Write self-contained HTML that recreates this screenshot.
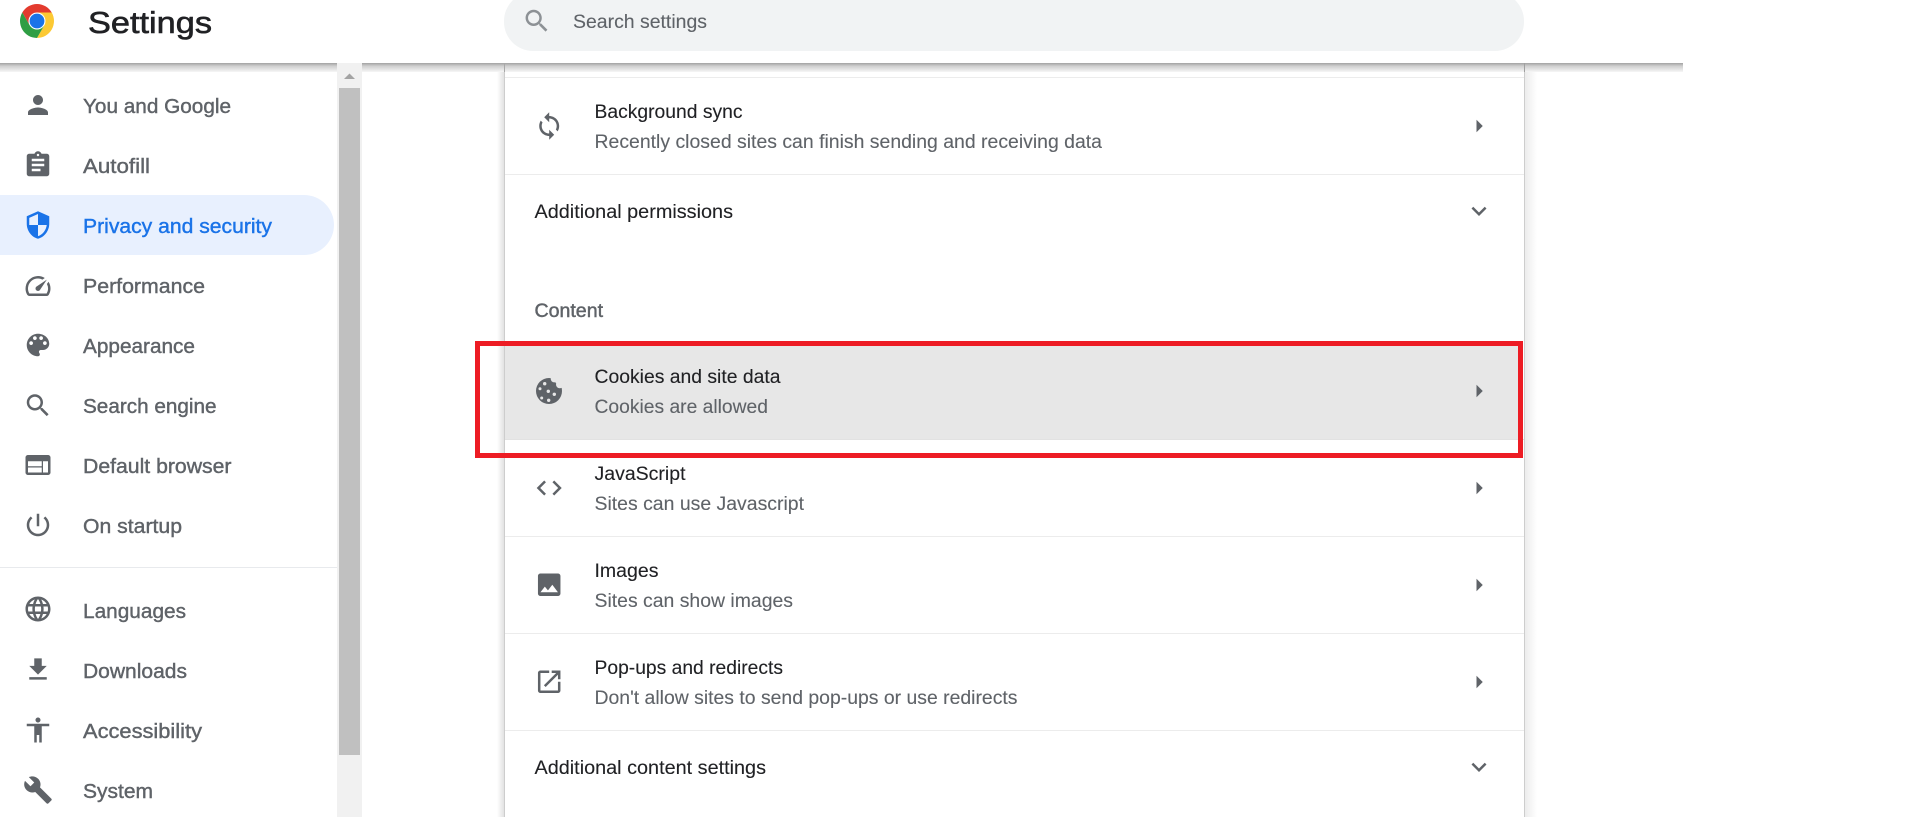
<!DOCTYPE html>
<html lang="en">
<head>
<meta charset="utf-8">
<title>Settings</title>
<style>
html,body{margin:0;padding:0;background:#fff;width:1911px;height:817px;overflow:hidden}
svg{display:block;filter:blur(.3px)}
text{font-family:"Liberation Sans",Arial,sans-serif}
.nav{font-size:20px;fill:#5f6368;stroke:#5f6368;stroke-width:.4px}
.t{font-size:19.3px;fill:#202124;stroke:#202124;stroke-width:.1px}
.s{font-size:19.3px;fill:#5f6368;stroke:#5f6368;stroke-width:.1px}
.i{fill:#5f6368}
</style>
</head>
<body>
<svg width="1911" height="817" viewBox="0 0 1911 817" xmlns="http://www.w3.org/2000/svg">
<defs>
<linearGradient id="hs" x1="0" y1="0" x2="0" y2="1"><stop offset="0" stop-color="#a2a2a2"/><stop offset=".35" stop-color="#cfcfcf"/><stop offset="1" stop-color="#f6f6f6"/></linearGradient>
<linearGradient id="cl" x1="0" y1="0" x2="1" y2="0"><stop offset="0" stop-color="#fff"/><stop offset="1" stop-color="#e2e2e2"/></linearGradient>
<linearGradient id="cr" x1="0" y1="0" x2="1" y2="0"><stop offset="0" stop-color="#ececec"/><stop offset="1" stop-color="#fff"/></linearGradient>
<path id="ar" d="M10 7l5 5-5 5z"/>
<path id="ch" d="M16.59 8.59L12 13.17 7.41 8.59 6 10l6 6 6-6z"/>
</defs>

<rect width="1911" height="817" fill="#fff"/>

<!-- card -->
<rect x="497" y="63" width="7" height="754" fill="url(#cl)"/>
<rect x="1525" y="63" width="12" height="754" fill="url(#cr)"/>
<rect x="504" y="63" width="1" height="754" fill="#cdcdcd"/>
<rect x="1524" y="63" width="1" height="754" fill="#cdcdcd"/>
<rect x="505" y="77" width="1019" height="1" fill="#ececec"/>
<rect x="505" y="174" width="1019" height="1" fill="#ececec"/>
<rect x="505" y="341" width="1016" height="98" fill="#e7e7e7"/>
<rect x="505" y="439" width="1019" height="1" fill="#e2e2e2"/>
<rect x="505" y="536" width="1019" height="1" fill="#ececec"/>
<rect x="505" y="633" width="1019" height="1" fill="#ececec"/>
<rect x="505" y="730" width="1019" height="1" fill="#ececec"/>

<!-- header -->
<rect x="0" y="0" width="1911" height="63" fill="#fff"/>
<rect x="0" y="63" width="1683" height="9" fill="url(#hs)"/>
<rect x="504" y="63" width="1" height="9" fill="#a8a8a8"/>
<rect x="1524" y="63" width="1" height="9" fill="#a0a0a0"/>

<!-- chrome logo -->
<g>
<circle cx="37" cy="21" r="17" fill="#fff"/>
<path fill="#e33b2e" d="M22.28 12.5A17 17 0 0 1 51.72 12.5L37 12.5A8.5 8.5 0 0 0 29.64 25.25Z"/>
<path fill="#fcc934" transform="rotate(120 37 21)" d="M22.28 12.5A17 17 0 0 1 51.72 12.5L37 12.5A8.5 8.5 0 0 0 29.64 25.25Z"/>
<path fill="#2f9e44" transform="rotate(240 37 21)" d="M22.28 12.5A17 17 0 0 1 51.72 12.5L37 12.5A8.5 8.5 0 0 0 29.64 25.25Z"/>
<circle cx="37" cy="21" r="7.4" fill="#1a73e8"/>
</g>
<text x="88" y="33" font-size="31" fill="#202124" stroke="#202124" stroke-width=".6" textLength="124" lengthAdjust="spacingAndGlyphs">Settings</text>

<!-- search -->
<rect x="504" y="-8" width="1020" height="59" rx="29" ry="29" fill="#f1f3f4"/>
<g transform="translate(521.8 6) scale(1.25)"><path fill="#8d9195" d="M15.5 14h-.79l-.28-.27C15.41 12.59 16 11.11 16 9.5 16 5.91 13.09 3 9.5 3S3 5.91 3 9.5 5.91 16 9.5 16c1.61 0 3.09-.59 4.23-1.57l.27.28v.79l5 4.99L20.49 19l-4.99-5zm-6 0C7.01 14 5 11.99 5 9.5S7.01 5 9.5 5 14 7.01 14 9.5 11.99 14 9.5 14z"/></g>
<text x="573" y="28" font-size="19.3" fill="#5f6368" stroke="#5f6368" stroke-width=".1" textLength="134" lengthAdjust="spacingAndGlyphs">Search settings</text>

<!-- sidebar -->
<path d="M0 195H304A30 30 0 0 1 304 255H0Z" fill="#e8f0fe"/>
<rect x="0" y="567" width="337" height="1" fill="#e8eaed"/>

<text class="nav" x="83" y="113" textLength="148" lengthAdjust="spacingAndGlyphs">You and Google</text>
<text class="nav" x="83" y="173" textLength="67" lengthAdjust="spacingAndGlyphs">Autofill</text>
<text class="nav" x="83" y="233" textLength="189" lengthAdjust="spacingAndGlyphs" style="fill:#1a73e8;stroke:#1a73e8">Privacy and security</text>
<text class="nav" x="83" y="293" textLength="122" lengthAdjust="spacingAndGlyphs">Performance</text>
<text class="nav" x="83" y="353" textLength="112" lengthAdjust="spacingAndGlyphs">Appearance</text>
<text class="nav" x="83" y="413" textLength="133.5" lengthAdjust="spacingAndGlyphs">Search engine</text>
<text class="nav" x="83" y="473" textLength="148.5" lengthAdjust="spacingAndGlyphs">Default browser</text>
<text class="nav" x="83" y="533" textLength="99" lengthAdjust="spacingAndGlyphs">On startup</text>
<text class="nav" x="83" y="618" textLength="103" lengthAdjust="spacingAndGlyphs">Languages</text>
<text class="nav" x="83" y="678" textLength="104" lengthAdjust="spacingAndGlyphs">Downloads</text>
<text class="nav" x="83" y="738" textLength="119" lengthAdjust="spacingAndGlyphs">Accessibility</text>
<text class="nav" x="83" y="798" textLength="70" lengthAdjust="spacingAndGlyphs">System</text>

<g class="i">
<path transform="translate(23 90) scale(1.25)" d="M12 12c2.21 0 4-1.79 4-4s-1.79-4-4-4-4 1.79-4 4 1.79 4 4 4zm0 2c-2.67 0-8 1.34-8 4v2h16v-2c0-2.66-5.33-4-8-4z"/>
<path transform="translate(23 150) scale(1.25)" d="M19 3h-4.18C14.4 1.84 13.3 1 12 1c-1.3 0-2.4.84-2.82 2H5c-1.1 0-2 .9-2 2v14c0 1.1.9 2 2 2h14c1.1 0 2-.9 2-2V5c0-1.1-.9-2-2-2zm-7 0c.55 0 1 .45 1 1s-.45 1-1 1-1-.45-1-1 .45-1 1-1zm2 14H7v-2h7v2zm3-4H7v-2h10v2zm0-4H7V7h10v2z"/>
<path fill="#1a73e8" transform="translate(23 210) scale(1.25)" d="M12 1L3 5v6c0 5.55 3.84 10.74 9 12 5.16-1.26 9-6.45 9-12V5l-9-4zm0 10.99h7c-.53 4.12-3.28 7.79-7 8.94V12H5V6.3l7-3.11v8.8z"/>
<path transform="translate(23 271) scale(1.25)" d="M20.38 8.57l-1.23 1.85a8 8 0 0 1-.22 7.58H5.07A8 8 0 0 1 15.58 6.85l1.85-1.23A10 10 0 0 0 3.35 19a2 2 0 0 0 1.72 1h13.85a2 2 0 0 0 1.74-1 10 10 0 0 0-.27-10.44zm-9.79 6.84a2 2 0 0 0 2.83 0l5.66-8.49-8.49 5.66a2 2 0 0 0 0 2.83z"/>
<path transform="translate(23 330) scale(1.25)" d="M12 3c-4.97 0-9 4.03-9 9s4.03 9 9 9c.83 0 1.5-.67 1.5-1.5 0-.39-.15-.74-.39-1.01-.23-.26-.38-.61-.38-.99 0-.83.67-1.5 1.5-1.5H16c2.76 0 5-2.24 5-5 0-4.42-4.03-8-9-8zm-5.5 9c-.83 0-1.5-.67-1.5-1.5S5.67 9 6.5 9 8 9.67 8 10.5 7.33 12 6.5 12zm3-4C8.67 8 8 7.33 8 6.5S8.67 5 9.5 5s1.5.67 1.5 1.5S10.33 8 9.5 8zm5 0c-.83 0-1.5-.67-1.5-1.5S13.67 5 14.5 5s1.5.67 1.5 1.5S15.33 8 14.5 8zm3 4c-.83 0-1.5-.67-1.5-1.5S16.67 9 17.5 9s1.5.67 1.5 1.5-.67 1.5-1.5 1.5z"/>
<path transform="translate(23 390.5) scale(1.25)" d="M15.5 14h-.79l-.28-.27C15.41 12.59 16 11.11 16 9.5 16 5.91 13.09 3 9.5 3S3 5.91 3 9.5 5.91 16 9.5 16c1.61 0 3.09-.59 4.23-1.57l.27.28v.79l5 4.99L20.49 19l-4.99-5zm-6 0C7.01 14 5 11.99 5 9.5S7.01 5 9.5 5 14 7.01 14 9.5 11.99 14 9.5 14z"/>
<path transform="translate(23 450) scale(1.25)" d="M20 4H4c-1.1 0-1.99.9-1.99 2L2 18c0 1.1.9 2 2 2h16c1.1 0 2-.9 2-2V6c0-1.1-.9-2-2-2zm-5 14H4v-4h11v4zm0-5H4V9h11v4zm5 5h-4V9h4v9z"/>
<path transform="translate(23 510) scale(1.25)" d="M13 3h-2v10h2V3zm4.83 2.17l-1.42 1.42C17.99 7.86 19 9.81 19 12c0 3.87-3.13 7-7 7s-7-3.13-7-7c0-2.19 1.01-4.14 2.58-5.42L6.17 5.17C4.23 6.82 3 9.26 3 12c0 4.97 4.03 9 9 9s9-4.03 9-9c0-2.74-1.23-5.18-3.17-6.83z"/>
<path transform="translate(23 594) scale(1.25)" d="M11.99 2C6.47 2 2 6.48 2 12s4.47 10 9.99 10C17.52 22 22 17.52 22 12S17.52 2 11.99 2zm6.93 6h-2.95c-.32-1.25-.78-2.45-1.38-3.56 1.84.63 3.37 1.91 4.33 3.56zM12 4.04c.83 1.2 1.48 2.53 1.91 3.96h-3.82c.43-1.43 1.08-2.76 1.91-3.96zM4.26 14C4.1 13.36 4 12.69 4 12s.1-1.36.26-2h3.38c-.08.66-.14 1.32-.14 2 0 .68.06 1.34.14 2H4.26zm.82 2h2.95c.32 1.25.78 2.45 1.38 3.56-1.84-.63-3.37-1.9-4.33-3.56zm2.95-8H5.08c.96-1.66 2.49-2.93 4.33-3.56C8.81 5.55 8.35 6.75 8.03 8zM12 19.96c-.83-1.2-1.48-2.53-1.91-3.96h3.82c-.43 1.43-1.08 2.76-1.91 3.96zM14.34 14H9.66c-.09-.66-.16-1.32-.16-2 0-.68.07-1.35.16-2h4.68c.09.65.16 1.32.16 2 0 .68-.07 1.34-.16 2zm.25 5.56c.6-1.11 1.06-2.31 1.38-3.56h2.95c-.96 1.65-2.49 2.93-4.33 3.56zM16.36 14c.08-.66.14-1.32.14-2 0-.68-.06-1.34-.14-2h3.38c.16.64.26 1.31.26 2s-.1 1.36-.26 2h-3.38z"/>
<path transform="translate(23 654.6) scale(1.25)" d="M19 9h-4V3H9v6H5l7 7 7-7zM5 18v2h14v-2H5z"/>
<path transform="translate(23 715) scale(1.25)" d="M12 2c1.1 0 2 .9 2 2s-.9 2-2 2-2-.9-2-2 .9-2 2-2zm9 7h-6v13h-2v-6h-2v6H9V9H3V7h18v2z"/>
<path transform="translate(23 775) scale(1.25)" d="M22.7 19l-9.1-9.1c.9-2.3.4-5-1.5-6.9-2-2-5-2.4-7.4-1.3L9 6 6 9 1.6 4.7C.4 7.1.9 10.1 2.9 12.1c1.9 1.9 4.6 2.4 6.9 1.5l9.1 9.1c.4.4 1 .4 1.4 0l2.3-2.3c.5-.4.5-1.1.1-1.4z"/>
</g>

<!-- scrollbar -->
<rect x="337" y="63" width="25" height="754" fill="#f1f1f1"/>
<rect x="339" y="88" width="21" height="667" fill="#c0c0c0"/>
<path d="M344 79L349.5 73.500L355 79Z" fill="#a3a3a3"/>

<!-- main text -->
<text class="t" x="594.500" y="118" textLength="148" lengthAdjust="spacingAndGlyphs">Background sync</text>
<text class="s" x="594.500" y="148" textLength="507.500" lengthAdjust="spacingAndGlyphs">Recently closed sites can finish sending and receiving data</text>
<text class="t" x="534.500" y="218" textLength="198.500" lengthAdjust="spacingAndGlyphs">Additional permissions</text>
<text x="534.500" y="317" font-size="19" fill="#5f6368" stroke="#5f6368" stroke-width=".45" textLength="68.500" lengthAdjust="spacingAndGlyphs">Content</text>
<text class="t" x="594.500" y="383" textLength="186" lengthAdjust="spacingAndGlyphs">Cookies and site data</text>
<text class="s" x="594.500" y="413" textLength="173.500" lengthAdjust="spacingAndGlyphs">Cookies are allowed</text>
<text class="t" x="594.500" y="480" textLength="91" lengthAdjust="spacingAndGlyphs">JavaScript</text>
<text class="s" x="594.500" y="510" textLength="209.500" lengthAdjust="spacingAndGlyphs">Sites can use Javascript</text>
<text class="t" x="594.500" y="577" textLength="64" lengthAdjust="spacingAndGlyphs">Images</text>
<text class="s" x="594.500" y="607" textLength="198.500" lengthAdjust="spacingAndGlyphs">Sites can show images</text>
<text class="t" x="594.500" y="674" textLength="188.500" lengthAdjust="spacingAndGlyphs">Pop-ups and redirects</text>
<text class="s" x="594.500" y="704" textLength="423" lengthAdjust="spacingAndGlyphs">Don't allow sites to send pop-ups or use redirects</text>
<text class="t" x="534.500" y="774" textLength="231.500" lengthAdjust="spacingAndGlyphs">Additional content settings</text>

<!-- row icons -->
<g class="i">
<path transform="translate(534.200 111) scale(1.25)" d="M12 4V1L8 5l4 4V6c3.310 0 6 2.690 6 6 0 1.010-.25 1.970-.7 2.800l1.460 1.460C19.540 15.030 20 13.570 20 12c0-4.420-3.580-8-8-8zm0 14c-3.310 0-6-2.690-6-6 0-1.010.25-1.970.7-2.800L5.240 7.740C4.460 8.970 4 10.430 4 12c0 4.420 3.580 8 8 8v3l4-4-4-4v3z"/>
<circle cx="549" cy="391" r="13"/>
<circle cx="554.300" cy="378.800" r="3.600" fill="#e7e7e7"/>
<circle cx="559.800" cy="384.500" r="3.800" fill="#e7e7e7"/>
<circle cx="558" cy="381" r="3" fill="#e7e7e7"/>
<g fill="#e7e7e7">
<circle cx="544.700" cy="383.700" r="1.700"/>
<circle cx="540" cy="388.700" r="1.500"/>
<circle cx="548.300" cy="391.300" r="1.700"/>
<circle cx="554.300" cy="394.300" r="1.700"/>
<circle cx="541.700" cy="398" r="1.500"/>
<circle cx="548.700" cy="400.300" r="1.700"/>
</g>
<path transform="translate(534.200 473) scale(1.25)" d="M9.400 16.600L4.800 12l4.600-4.600L8 6l-6 6 6 6 1.400-1.400zm5.200 0l4.600-4.600-4.600-4.600L16 6l6 6-6 6-1.400-1.400z"/>
<path transform="translate(534.200 569.700) scale(1.25)" d="M21 19V5c0-1.100-.9-2-2-2H5c-1.100 0-2 .9-2 2v14c0 1.100.9 2 2 2h14c1.100 0 2-.9 2-2zM8.500 13.500l2.500 3.010L14.500 12l4.500 6H5l3.500-4.500z"/>
<path transform="translate(534.200 666.700) scale(1.25)" d="M19 19H5V5h7V3H5c-1.100 0-2 .9-2 2v14c0 1.100.9 2 2 2h14c1.100 0 2-.9 2-2v-7h-2v7zM14 3v2h3.590l-9.830 9.830 1.410 1.410L19 6.410V10h2V3h-7z"/>
<use href="#ar" transform="translate(1464 111) scale(1.25)"/>
<use href="#ar" transform="translate(1464 376) scale(1.25)"/>
<use href="#ar" transform="translate(1464 473) scale(1.25)"/>
<use href="#ar" transform="translate(1464 570) scale(1.25)"/>
<use href="#ar" transform="translate(1464 667) scale(1.25)"/>
<use href="#ch" transform="translate(1464 196) scale(1.25)"/>
<use href="#ch" transform="translate(1464 752) scale(1.25)"/>
</g>

<!-- red highlight -->
<rect x="477.500" y="343.500" width="1043" height="112" fill="none" stroke="#ed1c24" stroke-width="5"/>
</svg>
</body>
</html>
